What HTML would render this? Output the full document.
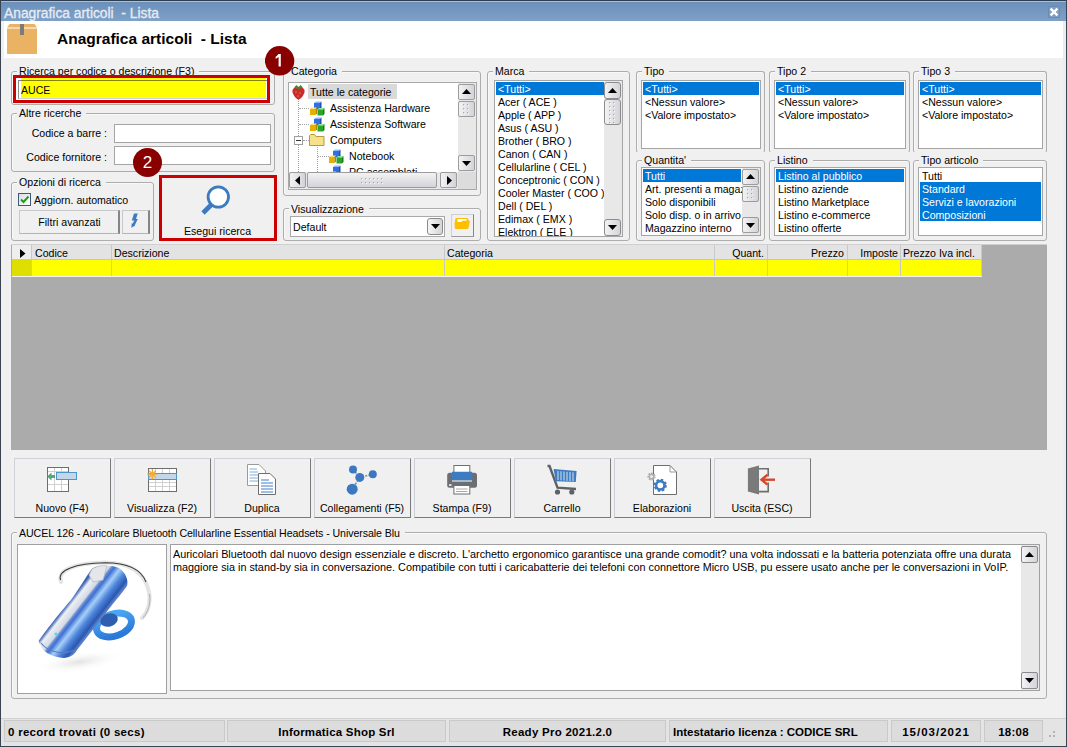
<!DOCTYPE html>
<html><head><meta charset="utf-8">
<style>
*{box-sizing:border-box}
html,body{margin:0;padding:0}
body{width:1067px;height:747px;position:relative;overflow:hidden;background:#f0f0f0;font-family:"Liberation Sans",sans-serif;font-size:11px;color:#000}
.a{position:absolute}
.gb{position:absolute;border:1px solid #adadad;border-radius:3px;box-shadow:inset 1px 1px 0 rgba(255,255,255,0.6)}
.gl{position:absolute;background:#f0f0f0;padding:0 5px 0 2px;line-height:12px;white-space:nowrap;font-size:10.6px}
.lb{position:absolute;background:#fff;border:1px solid #a5a5a5;overflow:hidden}
.row{position:absolute;left:1px;height:13px;line-height:15px;white-space:nowrap;font-size:10.6px;padding-left:2px}
.sel{background:#0078d7;color:#fff}
.t{position:absolute;white-space:nowrap;line-height:12px;font-size:10.6px}
.sb{font-weight:bold;font-size:11.5px;letter-spacing:0.42px}
</style></head><body>

<!-- window frame -->
<div class="a" style="left:0;top:0;width:1067px;height:747px;border:1px solid #3a4350;border-top-color:#2f3d4f"></div>
<!-- title bar -->
<div class="a" style="left:1px;top:1px;width:1065px;height:20px;background:linear-gradient(#6b90ba,#7fa1c8);border-top:1px solid #a6bfdc"></div>
<div class="a" style="left:4px;top:6px;font-size:13.8px;color:#e6ecf3;line-height:16px;white-space:nowrap;-webkit-text-stroke:0.3px #e6ecf3">Anagrafica articoli &nbsp;- Lista</div>
<div class="a" style="left:1048px;top:6px;width:12px;height:12px;background:#7f9ec4;border:1px solid #6a8ab2;border-radius:1px"></div>
<svg class="a" style="left:1048px;top:6px" width="12" height="12"><path d="M2.6 2.6 L9.4 9.4 M9.4 2.6 L2.6 9.4" stroke="#fff" stroke-width="2.3"/></svg>

<!-- banner -->
<div class="a" style="left:4px;top:21px;width:1059px;height:37px;background:#fff"></div>
<!-- box icon -->
<svg class="a" style="left:6px;top:23px" width="33" height="33"><path d="M3.5 1 H28.5 L31 4.5 H1Z" fill="#e9b363"/><rect x="1" y="5.5" width="30" height="25.5" fill="#e9b363"/><path d="M14 1 H18 V12 H14Z" fill="#7b7b7b"/></svg>
<div class="a" style="left:57px;top:29px;font-size:15.5px;font-weight:bold;line-height:19px;white-space:nowrap">Anagrafica articoli &nbsp;- Lista</div>

<!-- right edge strip -->
<div class="a" style="left:1063px;top:21px;width:3px;height:725px;background:#ececec"></div>

<!-- ===== Ricerca per codice ===== -->
<div class="gb" style="left:11px;top:71px;width:264px;height:34px"></div>
<div class="gl" style="left:17px;top:65px">Ricerca per codice o descrizione (F3)</div>
<div class="a" style="left:13px;top:75px;width:257px;height:28px;border:3px solid #cc0000;background:#fff"></div>
<div class="a" style="left:21px;top:78px;width:245px;height:20px;background:#ffff00"></div>
<div class="a" style="left:18px;top:80px;width:249px;height:19px;border-top:1px solid rgba(0,0,0,0.48);border-left:1px solid rgba(0,0,0,0.45);border-bottom:1px solid rgba(60,80,140,0.25)"></div>
<div class="t" style="left:21px;top:84px">AUCE</div>

<!-- ===== Altre ricerche ===== -->
<div class="gb" style="left:11px;top:113px;width:264px;height:59px"></div>
<div class="gl" style="left:17px;top:107px">Altre ricerche</div>
<div class="t" style="left:0px;width:107px;text-align:right;top:127px">Codice a barre :</div>
<div class="lb" style="left:114px;top:124px;width:157px;height:19px"></div>
<div class="t" style="left:0px;width:107px;text-align:right;top:151px">Codice fornitore :</div>
<div class="lb" style="left:114px;top:146px;width:157px;height:19px"></div>

<!-- ===== Opzioni di ricerca ===== -->
<div class="gb" style="left:11px;top:182px;width:143px;height:59px"></div>
<div class="gl" style="left:17px;top:176px">Opzioni di ricerca</div>
<div class="a" style="left:18px;top:193px;width:13px;height:13px;background:linear-gradient(135deg,#dcdcdc,#fff);border:1px solid #3d5a7e"></div>
<svg class="a" style="left:19px;top:194px" width="11" height="11"><path d="M2 5.5 L4.5 8 L9.5 2.5" stroke="#1a9e1a" stroke-width="1.9" fill="none"/></svg>
<div class="t" style="left:34px;top:194px">Aggiorn. automatico</div>
<div class="a" style="left:19px;top:210px;width:101px;height:24px;border:1px solid #c6c8cc;border-right:2px solid #858585;border-bottom-color:#b4b4b4;background:#f0f0f0"></div>
<div class="t" style="left:19px;top:216px;width:101px;text-align:center">Filtri avanzati</div>
<div class="a" style="left:122px;top:210px;width:28px;height:24px;border:1px solid #c6c8cc;border-right:2px solid #858585;border-bottom-color:#b4b4b4;background:#f0f0f0"></div>
<svg class="a" style="left:128px;top:213px" width="16" height="18"><path d="M6 0.4 L9.8 0.4 L8 5.9 L9.8 5.9 L6.8 12.3 L7.2 12.6 L3.3 14.8 L3.8 10 L4.6 10.8 L6.3 7.4 L3.8 7.4Z" fill="#3c7bc4"/></svg>

<!-- Esegui ricerca -->
<div class="a" style="left:159px;top:175px;width:118px;height:66px;border:3px solid #cc0000;background:#f0f0f0"></div>
<svg class="a" style="left:197px;top:183px" width="36" height="36"><circle cx="21.3" cy="14" r="10.2" stroke="#3c7bbf" stroke-width="2.8" fill="#fff"/><path d="M14.5 21.5 L6 30" stroke="#3c7bbf" stroke-width="4.6"/></svg>
<div class="t" style="left:158px;top:225px;width:119px;text-align:center">Esegui ricerca</div>


<!-- ===== Categoria ===== -->
<div class="gb" style="left:283px;top:71px;width:198px;height:125px"></div>
<div class="gl" style="left:289px;top:65px">Categoria</div>
<div class="lb" style="left:288px;top:82px;width:189px;height:108px;border-color:#a9a9a9"></div>
<!-- tree lines -->
<div class="a" style="left:298px;top:99px;width:0;height:85px;border-left:1px dotted #a0a0a0"></div>
<div class="a" style="left:299px;top:108px;width:10px;border-top:1px dotted #a0a0a0"></div>
<div class="a" style="left:299px;top:124px;width:10px;border-top:1px dotted #a0a0a0"></div>
<div class="a" style="left:303px;top:140px;width:6px;border-top:1px dotted #a0a0a0"></div>
<div class="a" style="left:317px;top:147px;width:0;height:25px;border-left:1px dotted #a0a0a0"></div>
<div class="a" style="left:318px;top:156px;width:11px;border-top:1px dotted #a0a0a0"></div>
<div class="a" style="left:294px;top:136px;width:9px;height:9px;border:1px solid #a0a0a0;background:#fff"></div>
<div class="a" style="left:296px;top:140px;width:5px;height:1px;background:#333"></div>
<!-- strawberry -->
<svg class="a" style="left:291px;top:84px" width="15" height="16"><path d="M7.5 3 C3 3 1 5 1.5 8 C2 11 5 15 7.5 15.5 C10 15 13 11 13.5 8 C14 5 12 3 7.5 3Z" fill="#cc2a2a"/><path d="M3 3.5 L5.5 1 L7.5 3 L9.5 1 L12 3.5 L7.5 5Z" fill="#3f8a2a"/><circle cx="5" cy="8" r="0.6" fill="#f7c7c7"/><circle cx="9" cy="9" r="0.6" fill="#f7c7c7"/><circle cx="7" cy="12" r="0.6" fill="#f7c7c7"/></svg>
<div class="a" style="left:308px;top:84px;width:89px;height:15px;background:#d9d9d9"></div>
<div class="t" style="left:310px;top:86px">Tutte le categorie</div>
<!-- cubes icons -->
<svg class="a" style="left:310px;top:101px" width="15" height="15"><path d="M4 2 L6 0.5 H11.5 L10 2Z" fill="#8ab8ff"/><rect x="4" y="2" width="6" height="6.5" fill="#2f6fe0"/><path d="M10 2 L11.5 0.5 V7 L10 8.5Z" fill="#1d4fb0"/><path d="M0 8 L1.5 6.5 H7 L5.5 8Z" fill="#ffe27a"/><rect x="0" y="8" width="5.5" height="6" fill="#e6b000"/><path d="M5.5 8 L7 6.5 V12.5 L5.5 14Z" fill="#b48400"/><path d="M7.5 8.5 L9 7 H14.5 L13 8.5Z" fill="#90e890"/><rect x="7.5" y="8.5" width="5.5" height="6" fill="#2aa52a"/><path d="M13 8.5 L14.5 7 V13 L13 14.5Z" fill="#1a7a1a"/></svg>
<div class="t" style="left:330px;top:102px">Assistenza Hardware</div>
<svg class="a" style="left:310px;top:117px" width="15" height="15"><path d="M4 2 L6 0.5 H11.5 L10 2Z" fill="#8ab8ff"/><rect x="4" y="2" width="6" height="6.5" fill="#2f6fe0"/><path d="M10 2 L11.5 0.5 V7 L10 8.5Z" fill="#1d4fb0"/><path d="M0 8 L1.5 6.5 H7 L5.5 8Z" fill="#ffe27a"/><rect x="0" y="8" width="5.5" height="6" fill="#e6b000"/><path d="M5.5 8 L7 6.5 V12.5 L5.5 14Z" fill="#b48400"/><path d="M7.5 8.5 L9 7 H14.5 L13 8.5Z" fill="#90e890"/><rect x="7.5" y="8.5" width="5.5" height="6" fill="#2aa52a"/><path d="M13 8.5 L14.5 7 V13 L13 14.5Z" fill="#1a7a1a"/></svg>
<div class="t" style="left:330px;top:118px">Assistenza Software</div>
<svg class="a" style="left:309px;top:132px" width="16" height="15"><path d="M0.5 3.5 L0.5 13.5 L15 13.5 L15 4.5 L7 4.5 L5.5 2.5 L1.5 2.5Z" fill="#f7e08a" stroke="#b89a3c"/></svg>
<div class="t" style="left:330px;top:134px">Computers</div>
<svg class="a" style="left:329px;top:149px" width="15" height="15"><path d="M4 2 L6 0.5 H11.5 L10 2Z" fill="#8ab8ff"/><rect x="4" y="2" width="6" height="6.5" fill="#2f6fe0"/><path d="M10 2 L11.5 0.5 V7 L10 8.5Z" fill="#1d4fb0"/><path d="M0 8 L1.5 6.5 H7 L5.5 8Z" fill="#ffe27a"/><rect x="0" y="8" width="5.5" height="6" fill="#e6b000"/><path d="M5.5 8 L7 6.5 V12.5 L5.5 14Z" fill="#b48400"/><path d="M7.5 8.5 L9 7 H14.5 L13 8.5Z" fill="#90e890"/><rect x="7.5" y="8.5" width="5.5" height="6" fill="#2aa52a"/><path d="M13 8.5 L14.5 7 V13 L13 14.5Z" fill="#1a7a1a"/></svg>
<div class="t" style="left:349px;top:150px">Notebook</div>
<div class="a" style="left:289px;top:164px;width:169px;height:8px;overflow:hidden">
 <svg class="a" style="left:40px;top:1px" width="15" height="15"><path d="M4 2 L6 0.5 H11.5 L10 2Z" fill="#8ab8ff"/><rect x="4" y="2" width="6" height="6.5" fill="#2f6fe0"/><path d="M10 2 L11.5 0.5 V7 L10 8.5Z" fill="#1d4fb0"/><path d="M0 8 L1.5 6.5 H7 L5.5 8Z" fill="#ffe27a"/><rect x="0" y="8" width="5.5" height="6" fill="#e6b000"/><path d="M5.5 8 L7 6.5 V12.5 L5.5 14Z" fill="#b48400"/><path d="M7.5 8.5 L9 7 H14.5 L13 8.5Z" fill="#90e890"/><rect x="7.5" y="8.5" width="5.5" height="6" fill="#2aa52a"/><path d="M13 8.5 L14.5 7 V13 L13 14.5Z" fill="#1a7a1a"/></svg>
 <div class="t" style="left:60px;top:2px">PC assemblati</div>
</div>
<!-- vscroll -->
<div class="a" style="left:458px;top:83px;width:18px;height:89px;background:#e8e8e8"></div>
<div class="a" style="left:458px;top:84px;width:17px;height:16px;border:1px solid #9c9c9c;border-radius:2px;background:linear-gradient(90deg,#f3f3f5,#d3d3d9)"></div>
<svg class="a" style="left:462px;top:89px" width="9" height="5"><path d="M0 5 L4.5 0 L9 5Z" fill="#000"/></svg>
<div class="a" style="left:458px;top:101px;width:17px;height:16px;border:1px solid #9c9c9c;border-radius:2px;background:linear-gradient(90deg,#f3f3f5,#d3d3d9)"></div><svg class="a" style="left:458px;top:101px" width="17" height="16"><rect x="5.5" y="3.5" width="1.5" height="1.5" fill="#fff"/><rect x="5" y="3" width="1.3" height="1.3" fill="#a6a6ae"/><rect x="9.5" y="3.5" width="1.5" height="1.5" fill="#fff"/><rect x="9" y="3" width="1.3" height="1.3" fill="#a6a6ae"/><rect x="5.5" y="7.5" width="1.5" height="1.5" fill="#fff"/><rect x="5" y="7" width="1.3" height="1.3" fill="#a6a6ae"/><rect x="9.5" y="7.5" width="1.5" height="1.5" fill="#fff"/><rect x="9" y="7" width="1.3" height="1.3" fill="#a6a6ae"/><rect x="5.5" y="11.5" width="1.5" height="1.5" fill="#fff"/><rect x="5" y="11" width="1.3" height="1.3" fill="#a6a6ae"/><rect x="9.5" y="11.5" width="1.5" height="1.5" fill="#fff"/><rect x="9" y="11" width="1.3" height="1.3" fill="#a6a6ae"/></svg>
<div class="a" style="left:458px;top:155px;width:17px;height:16px;border:1px solid #9c9c9c;border-radius:2px;background:linear-gradient(90deg,#f3f3f5,#d3d3d9)"></div>
<svg class="a" style="left:462px;top:161px" width="9" height="5"><path d="M0 0 L4.5 5 L9 0Z" fill="#000"/></svg>
<!-- hscroll -->
<div class="a" style="left:289px;top:172px;width:187px;height:17px;background:#e8e8e8"></div>
<div class="a" style="left:289px;top:172px;width:17px;height:16px;border:1px solid #9c9c9c;border-radius:2px;background:linear-gradient(90deg,#f3f3f5,#d3d3d9)"></div>
<svg class="a" style="left:295px;top:176px" width="5" height="9"><path d="M5 0 L0 4.5 L5 9Z" fill="#000"/></svg>
<div class="a" style="left:307px;top:172px;width:130px;height:16px;border:1px solid #9c9c9c;border-radius:2px;background:linear-gradient(#f3f3f5,#d3d3d9)"></div><svg class="a" style="left:307px;top:172px" width="130" height="16"><rect x="54.5" y="6.5" width="1.5" height="1.5" fill="#fff"/><rect x="54.0" y="6" width="1.3" height="1.3" fill="#a6a6ae"/><rect x="54.5" y="10.5" width="1.5" height="1.5" fill="#fff"/><rect x="54.0" y="10" width="1.3" height="1.3" fill="#a6a6ae"/><rect x="58.5" y="6.5" width="1.5" height="1.5" fill="#fff"/><rect x="58.0" y="6" width="1.3" height="1.3" fill="#a6a6ae"/><rect x="58.5" y="10.5" width="1.5" height="1.5" fill="#fff"/><rect x="58.0" y="10" width="1.3" height="1.3" fill="#a6a6ae"/><rect x="62.5" y="6.5" width="1.5" height="1.5" fill="#fff"/><rect x="62.0" y="6" width="1.3" height="1.3" fill="#a6a6ae"/><rect x="62.5" y="10.5" width="1.5" height="1.5" fill="#fff"/><rect x="62.0" y="10" width="1.3" height="1.3" fill="#a6a6ae"/><rect x="66.5" y="6.5" width="1.5" height="1.5" fill="#fff"/><rect x="66.0" y="6" width="1.3" height="1.3" fill="#a6a6ae"/><rect x="66.5" y="10.5" width="1.5" height="1.5" fill="#fff"/><rect x="66.0" y="10" width="1.3" height="1.3" fill="#a6a6ae"/><rect x="70.5" y="6.5" width="1.5" height="1.5" fill="#fff"/><rect x="70.0" y="6" width="1.3" height="1.3" fill="#a6a6ae"/><rect x="70.5" y="10.5" width="1.5" height="1.5" fill="#fff"/><rect x="70.0" y="10" width="1.3" height="1.3" fill="#a6a6ae"/><rect x="74.5" y="6.5" width="1.5" height="1.5" fill="#fff"/><rect x="74.0" y="6" width="1.3" height="1.3" fill="#a6a6ae"/><rect x="74.5" y="10.5" width="1.5" height="1.5" fill="#fff"/><rect x="74.0" y="10" width="1.3" height="1.3" fill="#a6a6ae"/></svg>
<div class="a" style="left:440px;top:172px;width:17px;height:16px;border:1px solid #9c9c9c;border-radius:2px;background:linear-gradient(90deg,#f3f3f5,#d3d3d9)"></div>
<svg class="a" style="left:447px;top:176px" width="5" height="9"><path d="M0 0 L5 4.5 L0 9Z" fill="#000"/></svg>
<div class="a" style="left:458px;top:172px;width:18px;height:17px;background:#dcdcdc"></div>

<!-- ===== Visualizzazione ===== -->
<div class="gb" style="left:283px;top:208px;width:198px;height:33px"></div>
<div class="gl" style="left:289px;top:203px">Visualizzazione</div>
<div class="lb" style="left:290px;top:216px;width:155px;height:21px;border-color:#a9a9a9"></div>
<div class="t" style="left:293px;top:221px">Default</div>
<div class="a" style="left:427px;top:218px;width:16px;height:17px;border:1px solid #8a8a8a;border-radius:3px;background:linear-gradient(90deg,#f6f6f6,#d4d4d8)"></div>
<svg class="a" style="left:431px;top:224px" width="9" height="5"><path d="M0 0 L4.5 5 L9 0Z" fill="#000"/></svg>
<div class="a" style="left:451px;top:214px;width:23px;height:23px;border:1px solid #cdd0d6;border-right:1.5px solid #858585;border-bottom:1.5px solid #9a9a9a;background:#f0f0f0"></div>
<svg class="a" style="left:453px;top:217px" width="18" height="14"><rect x="2" y="1" width="13.5" height="9" rx="2" fill="#ffc000"/><rect x="4.5" y="2" width="9" height="3" fill="#fff"/><path d="M1.5 5 H8 L9.5 3.8 H17 L15.5 11 Q15.3 12 14 12 H3 Q2 12 1.8 11Z" fill="#ffbe00"/></svg>

<!-- ===== Marca ===== -->
<div class="gb" style="left:487px;top:71px;width:143px;height:170px"></div>
<div class="gl" style="left:493px;top:65px">Marca</div>
<div class="lb" style="left:494px;top:80px;width:129px;height:157px">
 <div class="row sel" style="top:1px;width:108px">&lt;Tutti&gt;</div>
 <div class="row" style="top:14px">Acer ( ACE )</div>
 <div class="row" style="top:27px">Apple ( APP )</div>
 <div class="row" style="top:40px">Asus ( ASU )</div>
 <div class="row" style="top:53px">Brother ( BRO )</div>
 <div class="row" style="top:66px">Canon ( CAN )</div>
 <div class="row" style="top:79px">Cellularline ( CEL )</div>
 <div class="row" style="top:92px">Conceptronic ( CON )</div>
 <div class="row" style="top:105px">Cooler Master ( COO )</div>
 <div class="row" style="top:118px">Dell ( DEL )</div>
 <div class="row" style="top:131px">Edimax ( EMX )</div>
 <div class="row" style="top:144px">Elektron ( ELE )</div>
 <div class="a" style="left:109px;top:0px;width:18px;height:155px;background:#e8e8e8"></div>
 <div class="a" style="left:109px;top:1px;width:17px;height:17px;border:1px solid #8c8c8c;border-radius:3px;background:linear-gradient(90deg,#f3f3f5,#d3d3d9)"></div>
 <svg class="a" style="left:113px;top:7px" width="9" height="5"><path d="M0 5 L4.5 0 L9 5Z" fill="#000"/></svg>
 <div class="a" style="left:109px;top:18px;width:17px;height:26px;border:1px solid #8c8c8c;border-radius:3px;background:linear-gradient(90deg,#f3f3f5,#d3d3d9)"></div>
 <svg class="a" style="left:109px;top:18px" width="17" height="26"><rect x="5.5" y="3.5" width="1.5" height="1.5" fill="#fff"/><rect x="5" y="3" width="1.3" height="1.3" fill="#a6a6ae"/><rect x="9.5" y="3.5" width="1.5" height="1.5" fill="#fff"/><rect x="9" y="3" width="1.3" height="1.3" fill="#a6a6ae"/><rect x="5.5" y="7.5" width="1.5" height="1.5" fill="#fff"/><rect x="5" y="7" width="1.3" height="1.3" fill="#a6a6ae"/><rect x="9.5" y="7.5" width="1.5" height="1.5" fill="#fff"/><rect x="9" y="7" width="1.3" height="1.3" fill="#a6a6ae"/><rect x="5.5" y="11.5" width="1.5" height="1.5" fill="#fff"/><rect x="5" y="11" width="1.3" height="1.3" fill="#a6a6ae"/><rect x="9.5" y="11.5" width="1.5" height="1.5" fill="#fff"/><rect x="9" y="11" width="1.3" height="1.3" fill="#a6a6ae"/><rect x="5.5" y="15.5" width="1.5" height="1.5" fill="#fff"/><rect x="5" y="15" width="1.3" height="1.3" fill="#a6a6ae"/><rect x="9.5" y="15.5" width="1.5" height="1.5" fill="#fff"/><rect x="9" y="15" width="1.3" height="1.3" fill="#a6a6ae"/><rect x="5.5" y="19.5" width="1.5" height="1.5" fill="#fff"/><rect x="5" y="19" width="1.3" height="1.3" fill="#a6a6ae"/><rect x="9.5" y="19.5" width="1.5" height="1.5" fill="#fff"/><rect x="9" y="19" width="1.3" height="1.3" fill="#a6a6ae"/><rect x="5.5" y="23.5" width="1.5" height="1.5" fill="#fff"/><rect x="5" y="23" width="1.3" height="1.3" fill="#a6a6ae"/><rect x="9.5" y="23.5" width="1.5" height="1.5" fill="#fff"/><rect x="9" y="23" width="1.3" height="1.3" fill="#a6a6ae"/></svg>
 <div class="a" style="left:109px;top:138px;width:17px;height:17px;border:1px solid #8c8c8c;border-radius:3px;background:linear-gradient(90deg,#f3f3f5,#d3d3d9)"></div>
 <svg class="a" style="left:113px;top:144px" width="9" height="5"><path d="M0 0 L4.5 5 L9 0Z" fill="#000"/></svg>
</div>

<!-- ===== Tipo ===== -->
<div class="gb" style="left:636px;top:71px;width:129px;height:82px;border-bottom-color:transparent"></div>
<div class="gl" style="left:642px;top:65px">Tipo</div>
<div class="lb" style="left:641px;top:80px;width:120px;height:69px">
 <div class="row sel" style="top:1px;width:116px">&lt;Tutti&gt;</div>
 <div class="row" style="top:14px">&lt;Nessun valore&gt;</div>
 <div class="row" style="top:27px">&lt;Valore impostato&gt;</div>
</div>
<!-- ===== Tipo 2 ===== -->
<div class="gb" style="left:769px;top:71px;width:141px;height:82px;border-bottom-color:transparent"></div>
<div class="gl" style="left:775px;top:65px">Tipo 2</div>
<div class="lb" style="left:774px;top:80px;width:132px;height:69px">
 <div class="row sel" style="top:1px;width:128px">&lt;Tutti&gt;</div>
 <div class="row" style="top:14px">&lt;Nessun valore&gt;</div>
 <div class="row" style="top:27px">&lt;Valore impostato&gt;</div>
</div>
<!-- ===== Tipo 3 ===== -->
<div class="gb" style="left:913px;top:71px;width:134px;height:82px;border-bottom-color:transparent"></div>
<div class="gl" style="left:919px;top:65px">Tipo 3</div>
<div class="lb" style="left:918px;top:80px;width:125px;height:69px">
 <div class="row sel" style="top:1px;width:121px">&lt;Tutti&gt;</div>
 <div class="row" style="top:14px">&lt;Nessun valore&gt;</div>
 <div class="row" style="top:27px">&lt;Valore impostato&gt;</div>
</div>

<!-- ===== Quantita ===== -->
<div class="gb" style="left:636px;top:160px;width:129px;height:81px"></div>
<div class="gl" style="left:642px;top:154px">Quantita'</div>
<div class="lb" style="left:641px;top:167px;width:120px;height:69px">
 <div class="row sel" style="top:1px;width:98px">Tutti</div>
 <div class="row" style="top:14px">Art. presenti a magazzino</div>
 <div class="row" style="top:27px">Solo disponibili</div>
 <div class="row" style="top:40px">Solo disp. o in arrivo</div>
 <div class="row" style="top:53px">Magazzino interno</div>
 <div class="a" style="left:100px;top:0px;width:18px;height:67px;background:#e8e8e8"></div>
 <div class="a" style="left:100px;top:1px;width:17px;height:16px;border:1px solid #9c9c9c;border-radius:2px;background:linear-gradient(90deg,#f3f3f5,#d3d3d9)"></div>
 <svg class="a" style="left:104px;top:6px" width="9" height="5"><path d="M0 5 L4.5 0 L9 5Z" fill="#000"/></svg>
 <div class="a" style="left:100px;top:18px;width:17px;height:16px;border:1px solid #9c9c9c;border-radius:2px;background:linear-gradient(90deg,#f3f3f5,#d3d3d9)"></div><svg class="a" style="left:100px;top:18px" width="17" height="16"><rect x="5.5" y="3.5" width="1.5" height="1.5" fill="#fff"/><rect x="5" y="3" width="1.3" height="1.3" fill="#a6a6ae"/><rect x="9.5" y="3.5" width="1.5" height="1.5" fill="#fff"/><rect x="9" y="3" width="1.3" height="1.3" fill="#a6a6ae"/><rect x="5.5" y="7.5" width="1.5" height="1.5" fill="#fff"/><rect x="5" y="7" width="1.3" height="1.3" fill="#a6a6ae"/><rect x="9.5" y="7.5" width="1.5" height="1.5" fill="#fff"/><rect x="9" y="7" width="1.3" height="1.3" fill="#a6a6ae"/><rect x="5.5" y="11.5" width="1.5" height="1.5" fill="#fff"/><rect x="5" y="11" width="1.3" height="1.3" fill="#a6a6ae"/><rect x="9.5" y="11.5" width="1.5" height="1.5" fill="#fff"/><rect x="9" y="11" width="1.3" height="1.3" fill="#a6a6ae"/></svg>
 <div class="a" style="left:100px;top:49px;width:17px;height:16px;border:1px solid #9c9c9c;border-radius:2px;background:linear-gradient(90deg,#f3f3f5,#d3d3d9)"></div>
 <svg class="a" style="left:104px;top:55px" width="9" height="5"><path d="M0 0 L4.5 5 L9 0Z" fill="#000"/></svg>
</div>
<!-- ===== Listino ===== -->
<div class="gb" style="left:769px;top:160px;width:141px;height:81px"></div>
<div class="gl" style="left:775px;top:154px">Listino</div>
<div class="lb" style="left:774px;top:167px;width:132px;height:69px">
 <div class="row sel" style="top:1px;width:128px">Listino al pubblico</div>
 <div class="row" style="top:14px">Listino aziende</div>
 <div class="row" style="top:27px">Listino Marketplace</div>
 <div class="row" style="top:40px">Listino e-commerce</div>
 <div class="row" style="top:53px">Listino offerte</div>
</div>
<!-- ===== Tipo articolo ===== -->
<div class="gb" style="left:913px;top:160px;width:134px;height:81px"></div>
<div class="gl" style="left:919px;top:154px">Tipo articolo</div>
<div class="lb" style="left:918px;top:167px;width:125px;height:69px">
 <div class="row" style="top:1px;width:121px">Tutti</div>
 <div class="row sel" style="top:14px;width:121px">Standard</div>
 <div class="row sel" style="top:27px;width:121px">Servizi e lavorazioni</div>
 <div class="row sel" style="top:40px;width:121px">Composizioni</div>
</div>


<!-- ===== Grid ===== -->
<div class="a" style="left:11px;top:244px;width:1036px;height:206px;background:#ababab;border-top:1px solid #d0d0d0"></div>
<div class="a" style="left:12px;top:245px;width:970px;height:14px;background:#e3e3e3"></div>
<div class="a" style="left:12px;top:245px;width:20px;height:14px;background:#eeeeee"></div>
<svg class="a" style="left:20px;top:249px" width="6" height="9"><path d="M0 0 L5.5 4.5 L0 9Z" fill="#000"/></svg>
<div class="a" style="left:12px;top:259px;width:970px;height:18px;background:#ffff00;border-top:1px solid #dede00;border-bottom:1px solid #f4f4f4"></div>
<div class="a" style="left:12px;top:260px;width:20px;height:16px;background:#dede00"></div>
<div class="a" style="left:31px;top:245px;width:1px;height:31px;background:#c8c8c8"></div>
<div class="a" style="left:111px;top:245px;width:1px;height:31px;background:#c8c8c8"></div>
<div class="a" style="left:444px;top:245px;width:1px;height:31px;background:#c8c8c8"></div>
<div class="a" style="left:714px;top:245px;width:1px;height:31px;background:#c8c8c8"></div>
<div class="a" style="left:767px;top:245px;width:1px;height:31px;background:#c8c8c8"></div>
<div class="a" style="left:847px;top:245px;width:1px;height:31px;background:#c8c8c8"></div>
<div class="a" style="left:900px;top:245px;width:1px;height:31px;background:#c8c8c8"></div>
<div class="a" style="left:981px;top:245px;width:1px;height:31px;background:#c8c8c8"></div>
<div class="t" style="left:35px;top:247px">Codice</div>
<div class="t" style="left:114px;top:247px">Descrizione</div>
<div class="t" style="left:447px;top:247px">Categoria</div>
<div class="t" style="left:715px;top:247px;width:49px;text-align:right">Quant.</div>
<div class="t" style="left:768px;top:247px;width:76px;text-align:right">Prezzo</div>
<div class="t" style="left:848px;top:247px;width:50px;text-align:right">Imposte</div>
<div class="t" style="left:903px;top:247px">Prezzo Iva incl.</div>

<!-- ===== Toolbar ===== -->
<div class="a" style="left:14px;top:458px;width:97px;height:60px;border:1px solid #cdd0d6;border-right-color:#7a7a7a;border-bottom-color:#7a7a7a"></div>
<div class="a" style="left:114px;top:458px;width:97px;height:60px;border:1px solid #cdd0d6;border-right-color:#7a7a7a;border-bottom-color:#7a7a7a"></div>
<div class="a" style="left:214px;top:458px;width:97px;height:60px;border:1px solid #cdd0d6;border-right-color:#7a7a7a;border-bottom-color:#7a7a7a"></div>
<div class="a" style="left:314px;top:458px;width:97px;height:60px;border:1px solid #cdd0d6;border-right-color:#7a7a7a;border-bottom-color:#7a7a7a"></div>
<div class="a" style="left:414px;top:458px;width:97px;height:60px;border:1px solid #cdd0d6;border-right-color:#7a7a7a;border-bottom-color:#7a7a7a"></div>
<div class="a" style="left:514px;top:458px;width:97px;height:60px;border:1px solid #cdd0d6;border-right-color:#7a7a7a;border-bottom-color:#7a7a7a"></div>
<div class="a" style="left:614px;top:458px;width:97px;height:60px;border:1px solid #cdd0d6;border-right-color:#7a7a7a;border-bottom-color:#7a7a7a"></div>
<div class="a" style="left:714px;top:458px;width:97px;height:60px;border:1px solid #cdd0d6;border-right-color:#7a7a7a;border-bottom-color:#7a7a7a"></div>
<div class="t" style="left:13px;top:502px;width:98px;text-align:center">Nuovo (F4)</div>
<div class="t" style="left:113px;top:502px;width:98px;text-align:center">Visualizza (F2)</div>
<div class="t" style="left:213px;top:502px;width:98px;text-align:center">Duplica</div>
<div class="t" style="left:313px;top:502px;width:98px;text-align:center">Collegamenti (F5)</div>
<div class="t" style="left:413px;top:502px;width:98px;text-align:center">Stampa (F9)</div>
<div class="t" style="left:513px;top:502px;width:98px;text-align:center">Carrello</div>
<div class="t" style="left:613px;top:502px;width:98px;text-align:center">Elaborazioni</div>
<div class="t" style="left:713px;top:502px;width:98px;text-align:center">Uscita (ESC)</div>
<!-- icon: nuovo -->
<svg class="a" style="left:44px;top:464px" width="36" height="30"><rect x="3.5" y="3.5" width="21" height="24" fill="#fff" stroke="#6d6d6d"/><path d="M10.5 4 V27 M17.5 4 V27 M4 7.5 H24 M4 20.5 H24" stroke="#d0d0d0"/><rect x="12.5" y="8.5" width="20" height="7" fill="#c4d7ea" stroke="#4b97c9"/><path d="M3 12.5 L7.5 8.5 V11 H11 V14 H7.5 V16.5Z" fill="#5aa57c"/></svg>
<!-- icon: visualizza -->
<svg class="a" style="left:144px;top:464px" width="36" height="30"><rect x="4.5" y="4.5" width="28" height="23" fill="#fff" stroke="#6d6d6d"/><path d="M11.5 5 V27 M18.5 5 V27 M25.5 5 V27 M5 18.5 H32 M5 22.5 H32" stroke="#d0d0d0"/><rect x="4.5" y="9.5" width="28" height="6" fill="#c4d7ea" stroke="#4b97c9"/><g stroke="#f2ac3c" stroke-width="1.3"><path d="M8.4 5 V15.2 M3.3 10.1 H13.5 M4.8 6.5 L12 13.7 M12 6.5 L4.8 13.7"/></g></svg>
<!-- icon: duplica -->
<svg class="a" style="left:246px;top:463px" width="32" height="34"><path d="M1.5 1.5 H13 L19.5 8 V22.5 H1.5Z" fill="#fff" stroke="#9a9a9a"/><path d="M3.5 6 H11 M3.5 9 H12 M3.5 12 H12 M3.5 15 H12 M3.5 18 H12" stroke="#7fb0e0"/><path d="M12.5 10.5 H24 L29.5 16 V31.5 H12.5Z" fill="#fff" stroke="#6d6d6d"/><path d="M15 17 H23 M15 20 H27 M15 23 H27 M15 26 H27 M15 29 H27" stroke="#3d7fcf"/></svg>
<!-- icon: collegamenti -->
<svg class="a" style="left:344px;top:463px" width="34" height="34"><path d="M9 6.6 L15.8 14.4 L28.8 11.3 M15.8 14.4 L8.2 26.2" stroke="#8a8a8a" stroke-width="1.6" stroke-dasharray="2 1.2" fill="none"/><circle cx="9" cy="6.6" r="4" fill="#3b78c0"/><circle cx="15.8" cy="14.4" r="4.5" fill="#3b78c0"/><circle cx="28.8" cy="11.3" r="4" fill="#3b78c0"/><circle cx="8.2" cy="26.2" r="5.5" fill="#3b78c0"/></svg>
<!-- icon: stampa -->
<svg class="a" style="left:445px;top:464px" width="34" height="32"><rect x="2.2" y="8.8" width="29.8" height="15" rx="2.5" fill="#6b6e72"/><rect x="8.9" y="1.5" width="15.9" height="7" fill="#fff" stroke="#6b6e72"/><path d="M7 7.7 H27.2 V14.5 Q27.2 16.5 25.2 16.5 H9 Q7 16.5 7 14.5Z" fill="#3d7cc0"/><path d="M7 17 H27" stroke="#fff" stroke-width="1"/><rect x="8.9" y="21.5" width="15.9" height="8.5" fill="#fff" stroke="#6b6e72"/><path d="M11 25 H22.5 M11 27.5 H22.5" stroke="#a8a8a8"/><rect x="4" y="20.3" width="2.5" height="1.5" fill="#fff"/></svg>
<!-- icon: carrello -->
<svg class="a" style="left:545px;top:463px" width="34" height="34"><path d="M2.5 3 H4.5 L12.5 24.7 L31 26" stroke="#5e6166" stroke-width="2.4" fill="none"/><path d="M8.5 6 L31.6 8 L30.8 19 L10.9 18.3Z" fill="#3d7cc0"/><path d="M13 8 V17 M16 8.3 V17.3 M19 8.5 V17.5 M22 8.8 V17.8 M25 9 V18 M28 9.3 V18.3" stroke="#d8e6f4" stroke-width="1"/><circle cx="12.5" cy="29" r="2.6" fill="#5e6166"/><circle cx="26.8" cy="29" r="2.6" fill="#5e6166"/></svg>
<!-- icon: elaborazioni -->
<svg class="a" style="left:645px;top:463px" width="34" height="34"><path d="M8.5 2.5 H25 L31.5 9 V31.5 H8.5Z" fill="#fff" stroke="#6d6d6d"/><path d="M25 2.5 V9 H31.5" fill="none" stroke="#9a9a9a"/><circle cx="6.5" cy="13.5" r="2.8" fill="none" stroke="#b0b0b0" stroke-width="2.6" stroke-dasharray="1.6 0.9"/><circle cx="6.5" cy="13.5" r="2.2" fill="none" stroke="#b0b0b0" stroke-width="1.4"/><circle cx="15.3" cy="22.3" r="5" fill="none" stroke="#3d7cc0" stroke-width="3.2" stroke-dasharray="2.2 1.7"/><circle cx="15.3" cy="22.3" r="4.2" fill="none" stroke="#3d7cc0" stroke-width="2.6"/></svg>
<!-- icon: uscita -->
<svg class="a" style="left:745px;top:463px" width="34" height="34"><path d="M14 5.8 H23.2 V13.5 M23.2 19.5 V28.6 H14" fill="none" stroke="#6e6e6e" stroke-width="1.6"/><path d="M2.9 5.5 L14 2.4 V31.5 L2.9 28.6Z" fill="#7a7a7a"/><path d="M17 16.7 H30" stroke="#d6472b" stroke-width="2.4"/><path d="M22.5 11.8 L16.5 16.7 L22.5 21.6" stroke="#d6472b" stroke-width="2.4" fill="none"/></svg>

<!-- ===== Detail ===== -->
<div class="gb" style="left:11px;top:532px;width:1036px;height:167px"></div>
<div class="gl" style="left:17px;top:527px;letter-spacing:-0.07px">AUCEL 126 - Auricolare Bluetooth Cellularline Essential Headsets - Universale Blu</div>
<div class="lb" style="left:17px;top:544px;width:150px;height:150px;border-color:#a0a0a0">
<svg class="a" style="left:0;top:0" width="148" height="148" viewBox="1 1 148 148">
<defs>
<linearGradient id="bodyg" gradientUnits="userSpaceOnUse" x1="52.2" y1="57.2" x2="79.8" y2="78.8">
<stop offset="0" stop-color="#3a5fb2"/><stop offset="0.05" stop-color="#7f98d0"/><stop offset="0.11" stop-color="#eceff4"/><stop offset="0.3" stop-color="#d4dae4"/><stop offset="0.35" stop-color="#6d8fd8"/><stop offset="0.42" stop-color="#3f70d2"/><stop offset="0.57" stop-color="#a6cff8"/><stop offset="0.74" stop-color="#4f86dc"/><stop offset="0.92" stop-color="#2a57b0"/><stop offset="1" stop-color="#5a7ec8"/>
</linearGradient>
<radialGradient id="shad" cx="0.5" cy="0.5" r="0.5"><stop offset="0" stop-color="#e2e2e2"/><stop offset="1" stop-color="#fff" stop-opacity="0"/></radialGradient>
<linearGradient id="ringg" x1="0" y1="0" x2="0" y2="1"><stop offset="0" stop-color="#4aa6f4"/><stop offset="1" stop-color="#2a78d8"/></linearGradient>
</defs>
<ellipse cx="62" cy="118" rx="46" ry="10" fill="url(#shad)" transform="rotate(-8 62 118)"/>
<path d="M44 38 C40 26 58 19 88 18.5 C112 18.5 128 28 132 48 C134 58 131 68 125 74" fill="none" stroke="#e4e4e4" stroke-width="4" stroke-linecap="round"/>
<path d="M43.5 36 C40.5 26 58 19.5 88 18.8 C110 18.8 124 25 129 38" fill="none" stroke="#3c3c3c" stroke-width="1.1"/>
<path d="M132.5 50 C134 60 131 68 126 74" fill="none" stroke="#a8a8a8" stroke-width="0.9"/>
<ellipse cx="97" cy="81" rx="18" ry="11" fill="none" stroke="url(#ringg)" stroke-width="7" transform="rotate(-18 97 81)"/>
<ellipse cx="92" cy="76" rx="9" ry="6.5" fill="#2d5fae" transform="rotate(-18 92 76)"/>
<path d="M21.7 97 C26 90 45 66 54 56 C62 45 70 31 75 25 C80 21 93 20 102 24 C108 28 112 36 110 42 C104 50 99 56 95 61 L60 106 C57 112 50 115 43 113.5 C33 112 24 107 21.7 97Z" fill="url(#bodyg)"/>
<path d="M75 25 C79 22 86 21 90 22 L86 36 L76 38 L72 31Z" fill="#e4e6ea" stroke="#b4b4b8" stroke-width="0.7"/>
<path d="M24 99 C30 107 45 112 57 106" fill="none" stroke="#5a7cc4" stroke-width="1.2"/>
<circle cx="39" cy="90" r="1.5" fill="#46e0e6"/>
</svg>
</div>
<div class="lb" style="left:170px;top:544px;width:870px;height:147px;border-color:#a0a0a0"></div>
<div class="t" style="left:173px;top:548px;line-height:13px;font-size:10.83px">Auricolari Bluetooth dal nuovo design essenziale e discreto. L'archetto ergonomico garantisce una grande comodit? una volta indossati e la batteria potenziata offre una durata<br>maggiore sia in stand-by sia in conversazione. Compatibile con tutti i caricabatterie dei telefoni con connettore Micro USB, pu essere usato anche per le conversazioni in VoIP.</div>
<div class="a" style="left:1021px;top:545px;width:18px;height:145px;background:#e8e8e8"></div>
<div class="a" style="left:1021px;top:546px;width:17px;height:17px;border:1px solid #8a8a8a;border-radius:2px;background:linear-gradient(90deg,#f3f3f5,#d3d3d9)"></div>
<svg class="a" style="left:1025px;top:552px" width="9" height="5"><path d="M0 5 L4.5 0 L9 5Z" fill="#000"/></svg>
<div class="a" style="left:1021px;top:672px;width:17px;height:17px;border:1px solid #8a8a8a;border-radius:2px;background:linear-gradient(90deg,#f3f3f5,#d3d3d9)"></div>
<svg class="a" style="left:1025px;top:678px" width="9" height="5"><path d="M0 0 L4.5 5 L9 0Z" fill="#000"/></svg>

<!-- ===== Status bar ===== -->
<div class="a" style="left:1px;top:718px;width:1065px;height:28px;background:#e4e4e4;border-top:1px solid #d2d2d2"></div>
<div class="a" style="left:4px;top:720px;width:221px;height:22px;background:#dcdcdc;border:1px solid #c9c9c9"></div>
<div class="a" style="left:227px;top:720px;width:219px;height:22px;background:#dcdcdc;border:1px solid #c9c9c9"></div>
<div class="a" style="left:449px;top:720px;width:217px;height:22px;background:#dcdcdc;border:1px solid #c9c9c9"></div>
<div class="a" style="left:669px;top:720px;width:219px;height:22px;background:#dcdcdc;border:1px solid #c9c9c9"></div>
<div class="a" style="left:891px;top:720px;width:90px;height:22px;background:#dcdcdc;border:1px solid #c9c9c9"></div>
<div class="a" style="left:984px;top:720px;width:59px;height:22px;background:#dcdcdc;border:1px solid #c9c9c9"></div>
<div class="t sb" style="left:8px;top:726px;letter-spacing:0.28px">0 record trovati (0 secs)</div>
<div class="t sb" style="left:227px;top:726px;width:219px;text-align:center;letter-spacing:0.2px">Informatica Shop Srl</div>
<div class="t sb" style="left:449px;top:726px;width:217px;text-align:center;letter-spacing:0.26px">Ready Pro 2021.2.0</div>
<div class="t sb" style="left:673px;top:726px;letter-spacing:0px">Intestatario licenza : CODICE SRL</div>
<div class="t sb" style="left:891px;top:726px;width:90px;text-align:center;letter-spacing:1px">15/03/2021</div>
<div class="t sb" style="left:984px;top:726px;width:59px;text-align:center;letter-spacing:0.24px">18:08</div>
<svg class="a" style="left:1046px;top:729px" width="12" height="10"><g fill="#b4b4b4"><rect x="7" y="2" width="2" height="2"/><rect x="3" y="6" width="2" height="2"/><rect x="7" y="6" width="2" height="2"/></g></svg>

<!-- badges -->
<svg class="a" style="left:265px;top:45.6px" width="30" height="30"><circle cx="14.6" cy="14.8" r="14.7" fill="#880000"/><path d="M13.4 8.1 H15.8 V20.6 H13.6 V11 C12.8 11.8 11.6 12.4 10.6 12.7 V10.7 C11.8 10.2 12.8 9.2 13.4 8.1Z" fill="#fff"/></svg>
<div class="a" style="left:133px;top:148px;width:29px;height:29px;border-radius:50%;background:#880000;color:#fff;font-size:17px;line-height:29px;text-align:center">2</div>

</body></html>
